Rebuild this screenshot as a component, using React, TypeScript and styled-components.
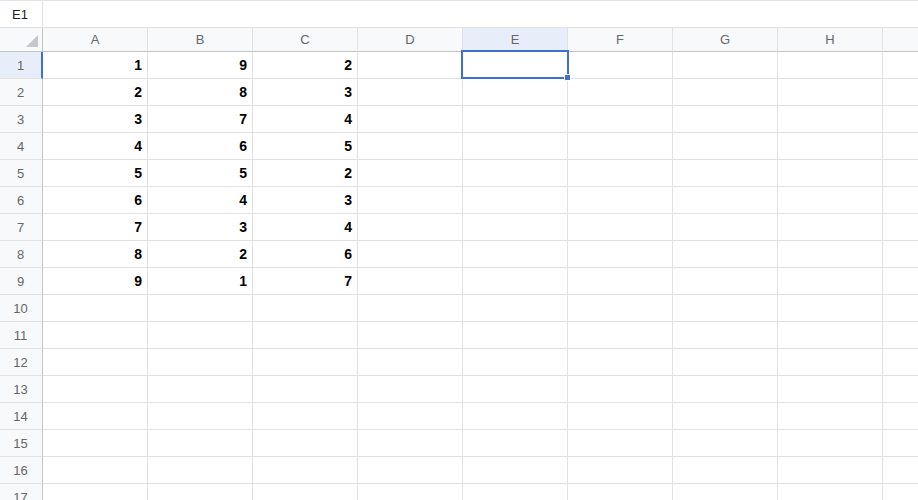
import { createGlobalStyle } from "styled-components"
import styled from "styled-components"

const GlobalStyle = createGlobalStyle`
  * {
    box-sizing: border-box;
  }

  body {
    margin: 0;
    background: #ffffff;
    font-family: "Liberation Sans", Arial, sans-serif;
    overflow: hidden;
  }
`

const Page = styled.div`
  width: 918px;
  height: 500px;
  overflow: hidden;
  display: flex;
  flex-direction: column;
  border-top: 1px solid #e3e3e3;
`

const FormulaBar = styled.div`
  display: flex;
  height: 27px;
  flex-shrink: 0;
  border-bottom: 1px solid #e1e1e1;
`

const NameBox = styled.div`
  width: 43px;
  display: flex;
  align-items: center;
  padding-left: 12px;
  border-right: 1px solid #e1e1e1;
  font-size: 13px;
  color: #222;
`

const Grid = styled.div`
  display: grid;
  grid-template-columns: 43px repeat(9, 105px);
  grid-template-rows: 24px;
  grid-auto-rows: 27px;
`

const Corner = styled.div`
  position: relative;
  background: #f8f9fa;
  border-right: 1px solid #c4c4c4;
  border-bottom: 1px solid #c4c4c4;

  &::after {
    content: "";
    position: absolute;
    right: 4px;
    bottom: 4px;
    width: 0;
    height: 0;
    border-left: 12px solid transparent;
    border-bottom: 12px solid #c4c7cb;
  }
`

const ColHeader = styled.div<{ $active?: boolean }>`
  display: flex;
  align-items: center;
  justify-content: center;
  background: ${(p) => (p.$active ? "#e8eef9" : "#f8f9fa")};
  border-right: 1px solid #e1e1e1;
  border-bottom: 1px solid #c4c4c4;
  font-size: 13px;
  color: #666;
`

const RowHeader = styled.div<{ $active?: boolean }>`
  display: flex;
  align-items: center;
  justify-content: center;
  background: ${(p) => (p.$active ? "#e8eef9" : "#f8f9fa")};
  border-right: ${(p) => (p.$active ? "2px solid #3d6fd6" : "1px solid #c4c4c4")};
  border-bottom: 1px solid #e1e1e1;
  font-size: 13px;
  color: #666;
  padding-right: ${(p) => (p.$active ? "0" : "1px")};
`

const Cell = styled.div<{ $selected?: boolean }>`
  position: relative;
  display: flex;
  align-items: center;
  justify-content: flex-end;
  padding-right: 5px;
  border-right: 1px solid #e1e1e1;
  border-bottom: 1px solid #e1e1e1;
  font-size: 14px;
  font-weight: 700;
  color: #000;
`

const Selection = styled.div`
  position: absolute;
  top: -2px;
  left: -2px;
  right: -2px;
  bottom: -1px;
  border: 2px solid #3d6fd6;
  pointer-events: none;
  z-index: 1;
`

const FillHandle = styled.div`
  position: absolute;
  right: -4px;
  bottom: -4px;
  width: 5px;
  height: 5px;
  background: #3d6fd6;
  border: 1px solid #ffffff;
  box-sizing: content-box;
`

const columns = ["A", "B", "C", "D", "E", "F", "G", "H", ""]

const data: number[][] = [
  [1, 9, 2],
  [2, 8, 3],
  [3, 7, 4],
  [4, 6, 5],
  [5, 5, 2],
  [6, 4, 3],
  [7, 3, 4],
  [8, 2, 6],
  [9, 1, 7],
]

const rowCount = 17
const activeCol = 4
const activeRow = 0

const App = () => {
  return (
    <Page>
      <GlobalStyle />
      <FormulaBar>
        <NameBox>E1</NameBox>
      </FormulaBar>

      <Grid>
        <Corner />
        {columns.map((col, i) => (
          <ColHeader key={`h-${i}`} $active={i === activeCol}>
            {col}
          </ColHeader>
        ))}

        {Array.from({ length: rowCount }).map((_, r) => (
          <RowFragment key={r} row={r} />
        ))}
      </Grid>
    </Page>
  )
}

const RowFragment = ({ row }: { row: number }) => {
  const values = data[row] || []

  return (
    <>
      <RowHeader $active={row === activeRow}>{row + 1}</RowHeader>
      {columns.map((_, c) => {
        const selected = row === activeRow && c === activeCol
        return (
          <Cell key={c} $selected={selected}>
            {values[c] ?? ""}
            {selected && (
              <Selection>
                <FillHandle />
              </Selection>
            )}
          </Cell>
        )
      })}
    </>
  )
}

export default App
